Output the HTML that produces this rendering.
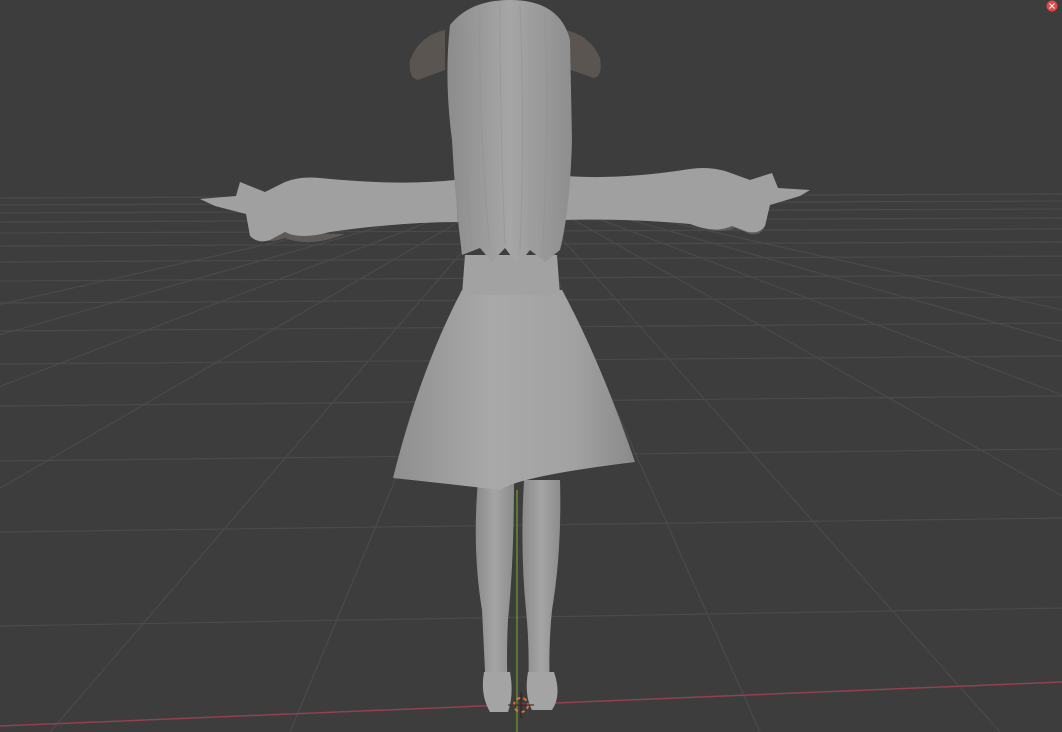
<!DOCTYPE html>
<html><head><meta charset="utf-8"><style>
html,body{margin:0;padding:0;background:#3d3d3d;width:1062px;height:732px;overflow:hidden}
svg{display:block}
</style></head><body>
<svg width="1062" height="732" viewBox="0 0 1062 732" xmlns="http://www.w3.org/2000/svg">
<defs>
<linearGradient id="skirt" x1="0" y1="0" x2="1" y2="0">
<stop offset="0" stop-color="#8f8f8f"/><stop offset="0.4" stop-color="#a9a9a9"/><stop offset="0.75" stop-color="#a2a2a2"/><stop offset="1" stop-color="#8a8a8a"/></linearGradient>
<linearGradient id="hair" x1="0" y1="0" x2="1" y2="0">
<stop offset="0" stop-color="#8c8c8c"/><stop offset="0.5" stop-color="#a6a6a6"/><stop offset="1" stop-color="#8e8e8e"/></linearGradient>
<linearGradient id="leg" x1="0" y1="0" x2="1" y2="0">
<stop offset="0" stop-color="#8a8a8a"/><stop offset="0.5" stop-color="#a5a5a5"/><stop offset="1" stop-color="#8c8c8c"/></linearGradient>
</defs>
<rect width="1062" height="732" fill="#3d3d3d"/>
<g stroke="#4a4a4a" stroke-width="1.2" fill="none">
<line x1="0" y1="198" x2="1062" y2="194"/>
<line x1="0" y1="205" x2="1062" y2="201"/>
<line x1="0" y1="213" x2="1062" y2="209"/>
<line x1="0" y1="222" x2="1062" y2="218"/>
<line x1="0" y1="233" x2="1062" y2="229"/>
<line x1="0" y1="246" x2="1062" y2="242"/>
<line x1="0" y1="262" x2="1062" y2="256"/>
<line x1="0" y1="281" x2="1062" y2="275"/>
<line x1="0" y1="303" x2="1062" y2="297"/>
<line x1="0" y1="331" x2="1062" y2="323"/>
<line x1="0" y1="364" x2="1062" y2="356"/>
<line x1="0" y1="406" x2="1062" y2="396"/>
<line x1="0" y1="461" x2="1062" y2="449"/>
<line x1="0" y1="532" x2="1062" y2="518"/>
<line x1="0" y1="626" x2="1062" y2="608"/>
<line x1="517" y1="188" x2="-1900" y2="732"/>
<line x1="517" y1="188" x2="-1400" y2="732"/>
<line x1="517" y1="188" x2="-900" y2="732"/>
<line x1="517" y1="188" x2="-420" y2="732"/>
<line x1="517" y1="188" x2="50" y2="732"/>
<line x1="517" y1="188" x2="290" y2="732"/>
<line x1="517" y1="188" x2="760" y2="732"/>
<line x1="517" y1="188" x2="1000" y2="732"/>
<line x1="517" y1="188" x2="1480" y2="732"/>
<line x1="517" y1="188" x2="1950" y2="732"/>
<line x1="517" y1="188" x2="2450" y2="732"/>
<line x1="517" y1="188" x2="2950" y2="732"/>
</g>
<line x1="0" y1="726" x2="1062" y2="682" stroke="#93404f" stroke-width="1.5"/>
<line x1="517" y1="490" x2="517" y2="732" stroke="#6a8a2a" stroke-width="1.5"/>
<path d="M445 30 Q420 35 410 60 Q408 78 418 80 L445 70 Z" fill="#5a5550"/>
<path d="M565 30 Q590 35 600 58 Q603 76 594 78 L565 68 Z" fill="#5a5550"/>
<path d="M252 232 Q262 246 285 238 Q310 248 345 234 Z" fill="#5f5a56"/>
<path d="M200 199 L236 196 L240 182 L265 192 L285 182 Q300 176 320 178 Q400 186 455 180 L458 222 Q400 222 330 232 Q300 240 285 232 L270 240 Q258 244 250 236 L246 214 L215 206 Z" fill="#a0a0a0"/>
<path d="M690 222 Q715 236 735 228 L750 234 Q760 236 764 228 Z" fill="#5f5a56"/>
<path d="M810 190 L778 188 L772 173 L750 180 L728 172 Q710 166 690 169 Q620 180 565 176 L563 220 Q620 218 690 224 Q715 234 732 226 L748 232 Q760 234 765 226 L770 205 L800 196 Z" fill="#a0a0a0"/>
<path d="M478 480 L514 480 Q514 560 508 620 Q506 660 508 690 L486 692 Q484 650 482 610 Q472 550 478 480 Z" fill="url(#leg)"/>
<path d="M524 480 L560 480 Q562 550 552 610 Q548 650 550 690 L528 692 Q530 650 526 610 Q520 550 524 480 Z" fill="url(#leg)"/>
<path d="M484 672 Q480 695 490 712 L508 712 Q514 695 510 672 Z" fill="#a4a4a4"/>
<path d="M528 672 Q524 695 532 710 L552 710 Q562 695 554 672 Z" fill="#a4a4a4"/>
<path d="M462 290 L562 290 Q600 360 635 462 Q520 476 500 490 Q450 484 393 478 Q420 370 462 290 Z" fill="url(#skirt)"/>
<path d="M465 255 L557 255 L560 295 L462 295 Z" fill="#a2a2a2"/>
<path d="M450 25 Q470 0 510 0 Q560 0 570 40 L572 140 Q570 210 560 250 L545 262 L530 250 L518 265 L505 248 L492 262 L480 248 L462 255 Q455 200 452 140 Q444 80 450 25 Z" fill="url(#hair)"/>
<g stroke="#909090" stroke-width="1" fill="none" opacity="0.5">
<path d="M480 10 Q478 120 490 250"/><path d="M500 5 Q500 130 505 245"/><path d="M520 5 Q525 130 520 250"/><path d="M545 15 Q550 130 542 255"/><path d="M465 30 Q462 140 472 248"/>
</g>
<circle cx="521" cy="705" r="7" fill="none" stroke="#e07030" stroke-width="2" stroke-dasharray="4 3"/>
<line x1="508" y1="705" x2="534" y2="705" stroke="#222" stroke-width="1"/>
<line x1="521" y1="692" x2="521" y2="718" stroke="#222" stroke-width="1"/>
<circle cx="1052" cy="6" r="5.5" fill="#e04848"/>
<path d="M1049.5 3.5 L1054.5 8.5 M1054.5 3.5 L1049.5 8.5" stroke="#fff" stroke-width="1"/>
</svg>
</body></html>
